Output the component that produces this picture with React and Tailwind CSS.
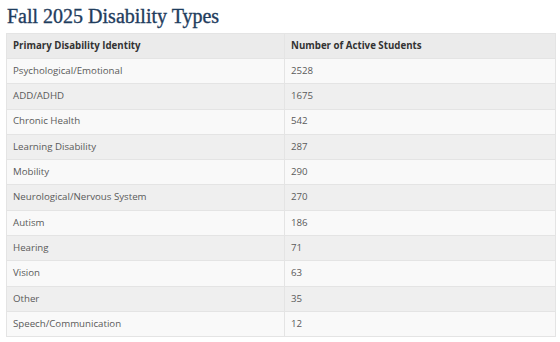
const rows = [
  ["Psychological/Emotional", "2528"],
  ["ADD/ADHD", "1675"],
  ["Chronic Health", "542"],
  ["Learning Disability", "287"],
  ["Mobility", "290"],
  ["Neurological/Nervous System", "270"],
  ["Autism", "186"],
  ["Hearing", "71"],
  ["Vision", "63"],
  ["Other", "35"],
  ["Speech/Communication", "12"],
];

export default function App() {
  return (
    <div className="w-[560px] h-[342px] bg-white px-[6px] pt-[3px] overflow-hidden">
      <h2 className="ml-[1px] text-[20px] leading-[26px] text-[#1f3d5e] font-['Liberation_Serif',serif] [-webkit-text-stroke:0.35px_#1f3d5e]">
        Fall 2025 Disability Types
      </h2>
      <table className="mt-[4px] w-[550px] border-collapse font-['Open_Sans',sans-serif] text-[9.7px]">
        <thead>
          <tr className="bg-[#ebebeb] h-[25px]">
            <th className="w-[278px] text-left font-bold text-[#333] px-[6px] border border-[#e4e4e4]">
              Primary Disability Identity
            </th>
            <th className="text-left font-bold text-[#333] px-[6px] border border-[#e4e4e4]">
              Number of Active Students
            </th>
          </tr>
        </thead>
        <tbody>
          {rows.map(([name, count], i) => (
            <tr
              key={name}
              className={i % 2 === 0 ? "bg-[#f9f9f9] h-[25.3px]" : "bg-[#efefef] h-[25.3px]"}
            >
              <td className="px-[6px] text-[#5a5a5a] border border-[#e4e4e4]">{name}</td>
              <td className="px-[6px] text-[#5a5a5a] border border-[#e4e4e4]">{count}</td>
            </tr>
          ))}
        </tbody>
      </table>
    </div>
  );
}
